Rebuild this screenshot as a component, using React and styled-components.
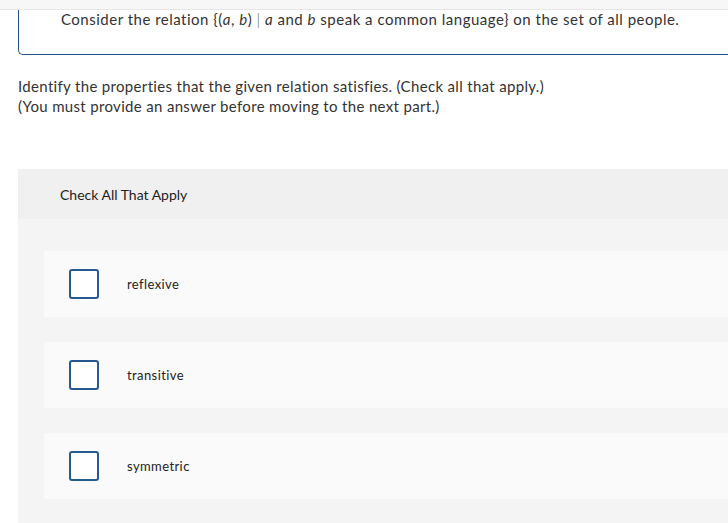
import React from "react";
import styled, { createGlobalStyle } from "styled-components";

const Global = createGlobalStyle`
  html, body { margin: 0; padding: 0; background: #ffffff; }
  body { font-family: "Lato", "Open Sans", Arial, sans-serif; color: #333333; overflow: hidden; }
`;

const Page = styled.div`
  width: 728px;
  height: 523px;
  overflow: hidden;
`;

const TopStrip = styled.div`
  height: 9px;
  background: #f7f7f7;
  border-bottom: 1px solid #e6e6e6;
`;

const PromptBox = styled.div`
  margin-left: 18px;
  height: 45px;
  box-sizing: border-box;
  border-left: 1px solid #24507f;
  border-bottom: 1px solid #24507f;
  border-bottom-left-radius: 5px;
  padding: 0 0 0 42px;
  font-size: 15px;
  line-height: 18px;
  letter-spacing: 0.5px;
  color: #333;
`;

const Bar = styled.span`
  color: #555;
  font-weight: 300;
`;

const Instructions = styled.div`
  margin-top: 21px;
  padding-left: 18px;
  font-size: 15px;
  line-height: 20px;
  letter-spacing: 0.33px;
  color: #333;
`;

const Panel = styled.div`
  margin: 53px 0 0 18px;
  background: #f4f4f4;
  height: 400px;
`;

const PanelHeader = styled.div`
  height: 50px;
  background: #f0f0f0;
  display: flex;
  align-items: center;
  padding-left: 42px;
  font-size: 14px;
  color: #222;
`;

const Options = styled.div`
  display: flex;
  flex-direction: column;
  gap: 25px;
  padding: 32px 0 0 26px;
`;

const OptionCard = styled.label`
  height: 66px;
  background: #fafafa;
  display: flex;
  align-items: center;
  padding-left: 25px;
  gap: 28px;
  border-radius: 2px 0 0 2px;
`;

const Box = styled.span`
  width: 30px;
  height: 30px;
  box-sizing: border-box;
  border: 2px solid #255a8e;
  border-radius: 3px;
  background: #ffffff;
  flex: none;
`;

const Label = styled.span`
  font-size: 13px;
  letter-spacing: 0.4px;
  color: #222;
`;

const options = ["reflexive", "transitive", "symmetric"];

export default function App() {
  return (
    <Page>
      <Global />
      <TopStrip />
      <PromptBox>
        Consider the relation {"{"}(<i>a</i>, <i>b</i>) <Bar>|</Bar> <i>a</i> and <i>b</i> speak a common language{"}"} on the set of all people.
      </PromptBox>
      <Instructions>
        Identify the properties that the given relation satisfies. (Check all that apply.)
        <br />
        (You must provide an answer before moving to the next part.)
      </Instructions>
      <Panel>
        <PanelHeader>Check All That Apply</PanelHeader>
        <Options>
          {options.map((o) => (
            <OptionCard key={o}>
              <Box />
              <Label>{o}</Label>
            </OptionCard>
          ))}
        </Options>
      </Panel>
    </Page>
  );
}
